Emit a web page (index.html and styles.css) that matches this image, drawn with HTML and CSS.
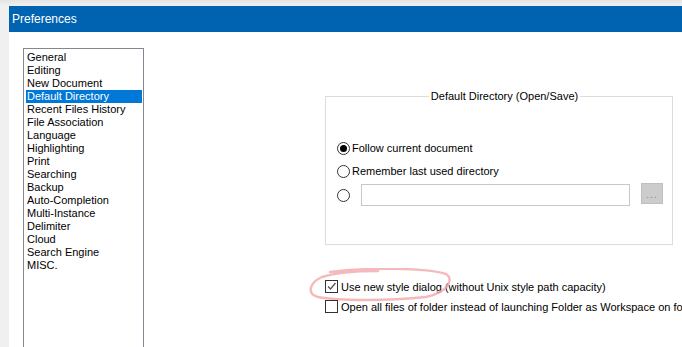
FILE: index.html
```html
<!DOCTYPE html>
<html>
	<head>
		<link rel="stylesheet" href="styles.css">
		<title>Preferences</title>
	</head>
	<body>
		<div class="desk">
			<div class="window">
				<div class="titlebar">Preferences</div>
				<div class="content">
					<ul class="listbox">
						<li>General</li>
						<li>Editing</li>
						<li>New Document</li>
						<li class="selected">Default Directory</li>
						<li>Recent Files History</li>
						<li>File Association</li>
						<li>Language</li>
						<li>Highlighting</li>
						<li>Print</li>
						<li>Searching</li>
						<li>Backup</li>
						<li>Auto-Completion</li>
						<li>Multi-Instance</li>
						<li>Delimiter</li>
						<li>Cloud</li>
						<li>Search Engine</li>
						<li>MISC.</li>
					</ul>
					<div class="panel">
						<fieldset class="group">
							<legend>Default Directory (Open/Save)</legend>
							<div class="option">
								<span class="radio checked"></span>Follow current document
							</div>
							<div class="option">
								<span class="radio"></span>Remember last used directory
							</div>
							<div class="option custom">
								<span class="radio"></span>
								<span class="pathbox"></span>
								<span class="browse">...</span>
							</div>
						</fieldset>
						<div class="checks">
							<div class="check">
								<span class="box ticked">
									<svg width="11" height="11" viewBox="0 0 11 11"><path d="M2 5.5 L4.5 8 L9.5 2" fill="none" stroke="#555" stroke-width="1.3"/></svg>
								</span>Use new style dialog (without Unix style path capacity)
								<svg class="scribble" width="146" height="34" viewBox="0 0 146 34">
									<path d="M22 4 C60 -1 120 0 138 6 C146 11 141 24 118 29 C80 33 30 33 10 29 C-2 26 2 14 14 9 C30 4 50 3 70 3" fill="none" stroke="#f2a8ab" stroke-width="2.4" stroke-linecap="round" opacity="0.8"/>
								</svg>
							</div>
							<div class="check">
								<span class="box"></span>Open all files of folder instead of launching Folder as Workspace on folder dropping
							</div>
						</div>
					</div>
				</div>
			</div>
		</div>
	</body>
</html>
```

FILE: styles.css
```css
html, body {
	margin: 0;
	height: 100%;
	overflow: hidden;
}
body {
	font-family: "Liberation Sans", Arial, sans-serif;
	font-size: 11px;
	color: #000;
}
.desk {
	height: 100%;
	padding: 6px 0 0 9px;
	box-sizing: border-box;
	background: linear-gradient(#e4e4e4, #f0f0f0 6px);
}
.window {
	height: 100%;
	background: #fff;
	display: flex;
	flex-direction: column;
}
.titlebar {
	height: 26px;
	line-height: 26px;
	padding-left: 3px;
	background: #0063b1;
	color: #fff;
	font-size: 12px;
	flex: none;
}
.content {
	flex: 1;
	display: flex;
	overflow: hidden;
}
.listbox {
	list-style: none;
	margin: 16px 0 0 14px;
	padding: 2px 1px 0 2px;
	width: 116px;
	height: 320px;
	border: 1px solid #828790;
	flex: none;
}
.listbox li {
	height: 13px;
	line-height: 13px;
	padding-left: 1px;
	white-space: nowrap;
}
.listbox li.selected {
	background: #0078d7;
	color: #fff;
}
.panel {
	margin: 57px 0 0 181px;
	width: 360px;
	flex: none;
}
.group {
	margin: 0;
	padding: 38px 0 0 11px;
	width: 348px;
	height: 156px;
	box-sizing: border-box;
	border: 1px solid #dcdcdc;
	border-radius: 0;
}
.group legend {
	margin: 0 auto;
	padding: 0 2px;
	line-height: 14px;
}
.option {
	display: flex;
	align-items: center;
	height: 14px;
	margin-bottom: 9px;
	white-space: nowrap;
}
.option.custom {
	height: 22px;
	margin-top: -3px;
}
.radio {
	width: 11px;
	height: 11px;
	border: 1px solid #333;
	border-radius: 50%;
	margin-right: 2px;
	flex: none;
	display: flex;
	align-items: center;
	justify-content: center;
}
.radio.checked::after {
	content: "";
	width: 7px;
	height: 7px;
	border-radius: 50%;
	background: #000;
}
.pathbox {
	width: 267px;
	height: 20px;
	border: 1px solid #c8c8c8;
	margin-left: 9px;
	flex: none;
}
.browse {
	width: 20px;
	height: 19px;
	margin: -3px 0 0 11px;
	background: #cccccc;
	border: 1px solid #c0c0c0;
	color: #8a8a9a;
	font-size: 10px;
	line-height: 22px;
	text-align: center;
	letter-spacing: 1px;
	flex: none;
}
.checks {
	margin-top: 35px;
}
.check {
	position: relative;
	display: flex;
	align-items: center;
	height: 13px;
	margin-bottom: 7px;
	white-space: nowrap;
}
.box {
	width: 11px;
	height: 11px;
	border: 1px solid #333;
	margin-right: 3px;
	flex: none;
	display: flex;
}
.scribble {
	position: absolute;
	left: -17px;
	top: -12px;
}
```
